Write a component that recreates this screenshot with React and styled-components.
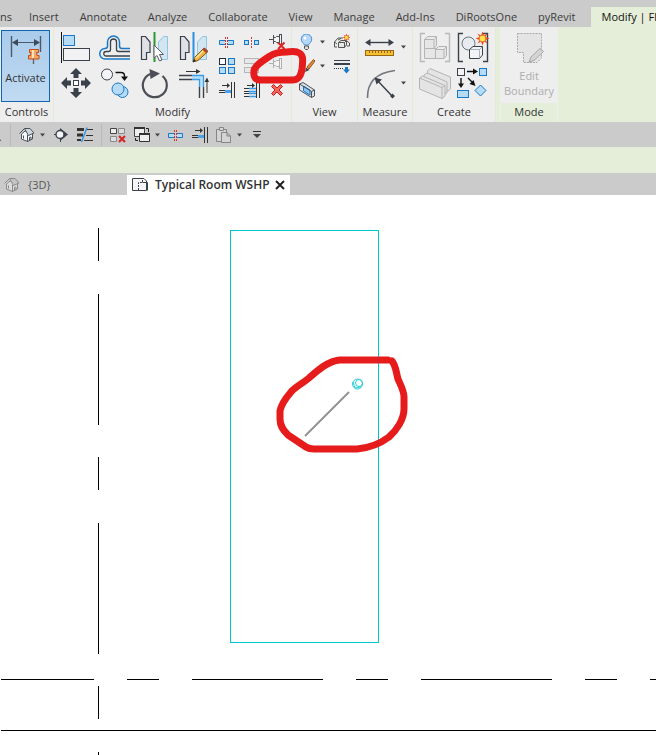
import styled, { createGlobalStyle } from "styled-components";

const INK = "#3a414b";
const BLUE = "#1a78c8";
const PALE = "#b5dcf4";
const DIM = "#b4b4b4";

const tabs = ["Insert", "Annotate", "Analyze", "Collaborate", "View", "Manage", "Add-Ins", "DiRootsOne", "pyRevit"];

export default function App() {
    return (
        <Page>
            <GlobalStyle />

            <TabBar>
                <FirstTab type="button">ns</FirstTab>
                {tabs.map((tab) => (
                    <Tab type="button" key={tab}>{tab}</Tab>
                ))}
                <ActiveTab type="button">Modify | Fl</ActiveTab>
            </TabBar>

            <Ribbon>
                <Panel>
                    <Activate type="button">
                        <DimensionIcon />
                        Activate
                    </Activate>
                    <PanelLabel>Controls</PanelLabel>
                </Panel>

                <Panel>
                    <Tools $pad={6} $gap={10}>
                        <LargeGrid $cols={4} $gap={7}>
                            <Tool label="Align"><AlignIcon /></Tool>
                            <Tool label="Offset"><OffsetIcon /></Tool>
                            <Tool label="Mirror - Pick Axis"><MirrorPickIcon /></Tool>
                            <Tool label="Mirror - Draw Axis"><MirrorDrawIcon /></Tool>
                            <Tool label="Move"><MoveIcon /></Tool>
                            <Tool label="Copy"><CopyIcon /></Tool>
                            <Tool label="Rotate"><RotateIcon /></Tool>
                            <Tool label="Trim to Corner"><CornerIcon /></Tool>
                        </LargeGrid>
                        <SmallGrid $cols={3}>
                            <Tool label="Split Element"><SplitIcon /></Tool>
                            <Tool label="Split with Gap"><SplitGapIcon /></Tool>
                            <Tool label="Unpin"><PinIcon color="#4a4f55" crossed /></Tool>
                            <Tool label="Array"><ArrayIcon /></Tool>
                            <Tool label="Scale" disabled><ScaleIcon /></Tool>
                            <Tool label="Pin" disabled><PinIcon color="#b0b0b0" /></Tool>
                            <Tool label="Trim Single"><TrimIcon /></Tool>
                            <Tool label="Trim Multiple"><TrimIcon multiple /></Tool>
                            <Tool label="Delete"><DeleteIcon /></Tool>
                        </SmallGrid>
                    </Tools>
                    <PanelLabel>Modify</PanelLabel>
                    <PinMarkup viewBox="0 0 62 40" aria-hidden="true">
                        <path d="M38 6 C31 6 25 7 21 10 C15 14 5 20 5 25 C4 32 7 34 12 34 H43 C50 34 52 30 53 23 C54 14 55 8 48 6 C44 5 40 6 36 6" />
                    </PinMarkup>
                </Panel>

                <Panel>
                    <Tools $pad={7} $gap={9}>
                        <SmallStack>
                            <Split><Tool label="Hide in View"><BulbIcon /></Tool><Caret /></Split>
                            <Split><Tool label="Override Graphics"><BrushIcon /></Tool><Caret /></Split>
                            <Tool label="Selection Box"><BoxIcon /></Tool>
                        </SmallStack>
                        <SmallStack>
                            <Tool label="Displace Elements"><DisplaceIcon /></Tool>
                            <Tool label="Linework"><LineworkIcon /></Tool>
                        </SmallStack>
                    </Tools>
                    <PanelLabel>View</PanelLabel>
                </Panel>

                <Panel>
                    <Tools $pad={6} $gap={6}>
                        <LargeGrid $cols={1} $gap={6}>
                            <Split><Tool label="Measure"><MeasureIcon /></Tool><Caret /></Split>
                            <Split><Tool label="Dimension"><RadiusIcon /></Tool><Caret /></Split>
                        </LargeGrid>
                    </Tools>
                    <PanelLabel>Measure</PanelLabel>
                </Panel>

                <Panel>
                    <Tools $pad={6} $gap={6}>
                        <LargeGrid $cols={2} $gap={6}>
                            <Tool label="Create Assembly" disabled><AssemblyIcon /></Tool>
                            <Tool label="Create Group"><GroupIcon /></Tool>
                            <Tool label="Create Parts" disabled><PartsIcon /></Tool>
                            <Tool label="Create Similar"><SimilarIcon /></Tool>
                        </LargeGrid>
                    </Tools>
                    <PanelLabel>Create</PanelLabel>
                </Panel>

                <ModePanel>
                    <EditButton type="button" disabled>
                        <BoundaryIcon />
                        Edit
                        <br />
                        Boundary
                    </EditButton>
                    <PanelLabel $green>Mode</PanelLabel>
                </ModePanel>
            </Ribbon>

            <QuickBar>
                <Clip />
                <Divider />
                <Split><Tool label="Default 3D View"><HouseIcon /></Tool><Caret /></Split>
                <Tool label="Section"><SectionIcon /></Tool>
                <Tool label="Thin Lines"><ThinLinesIcon /></Tool>
                <Divider />
                <Tool label="Close Inactive Views"><CloseViewsIcon /></Tool>
                <Split><Tool label="Switch Windows"><SwitchIcon /></Tool><Caret /></Split>
                <Tool label="Split Element"><SplitIcon /></Tool>
                <Tool label="Trim Single"><TrimIcon /></Tool>
                <Split><Tool label="Paste" disabled><PasteIcon /></Tool><Caret /></Split>
                <Tool label="Customize Quick Access Toolbar"><CustomizeIcon /></Tool>
            </QuickBar>

            <OptionsBar />

            <DocTabs>
                <DocTab type="button">
                    <HouseIcon faded />
                    {"{3D}"}
                </DocTab>
                <OpenDoc>
                    <DocTitle type="button">
                        <SheetIcon />
                        Typical Room WSHP
                    </DocTitle>
                    <Tool label="Close view"><CrossIcon /></Tool>
                </OpenDoc>
            </DocTabs>

            <Canvas>
                <Drawing role="img" aria-label="Floor plan">
                    <g fill="none" stroke="#000" shapeRendering="crispEdges">
                        <line x1="98.5" y1="33" x2="98.5" y2="100%" strokeDasharray="33 33 131 32" />
                        <line x1="1" y1="484.5" x2="100%" y2="484.5" strokeDasharray="131 33 32 33" strokeDashoffset="38" />
                        <line x1="1" y1="535.5" x2="100%" y2="535.5" />
                        <rect x="230.5" y="35.5" width="148" height="412" stroke="#00c8c8" />
                    </g>
                    <line x1="305" y1="241" x2="349" y2="197" stroke="#929292" strokeWidth="2" />
                    <g fill="none" stroke="#2cd0d4">
                        <circle cx="357.5" cy="189" r="5" />
                        <circle cx="359" cy="188" r="3.5" />
                        <path d="M353 187 L355 193 L361 192" />
                    </g>
                    <path
                        d="M388 165 H340 C328 166 318 175 309 183 C302 189 295 192 291 197 C285 204 281 210 280 216 V224 C280 231 283 235 288 240 L306 252 C309 254 310 254 314 254 H357 C369 253 381 248 389 242 C397 235 404 224 404 214 V202 C404 196 401 191 398 184 C396 177 396 171 392 166"
                        fill="none"
                        stroke="#e61c1c"
                        strokeWidth="7"
                        strokeLinecap="round"
                        strokeLinejoin="round"
                    />
                </Drawing>
            </Canvas>
        </Page>
    );
}

function Tool({ label, disabled, children }) {
    return (
        <ToolButton type="button" aria-label={label} title={label} disabled={disabled}>
            {children}
        </ToolButton>
    );
}

function Caret() {
    return (
        <CaretSvg viewBox="0 0 5 4">
            <path d="M0 0.5 H5 L2.5 3.5 Z" fill="#444" />
        </CaretSvg>
    );
}

function Clip() {
    return (
        <ClipSvg viewBox="0 0 2 16">
            <path d="M0 12 L1 14 H0 Z" fill="#444" />
        </ClipSvg>
    );
}

/* 32px ribbon icons */

function DimensionIcon() {
    return (
        <Icon32 viewBox="0 0 32 32">
            <g stroke="#4b5a6b" fill="none">
                <path d="M1.5 3 V24 M30.5 3 V19" strokeWidth="1.4" />
                <path d="M3 9.5 H29" />
            </g>
            <path d="M2 9.5 L8 6 V13 Z M30 9.5 L24 6 V13 Z" fill="#3c4a5a" />
            <path d="M23.5 25 V31" stroke="#666" strokeWidth="1.4" />
            <path d="M19.5 16.5 H28.5 V19.5 H26.5 L27 22.5 H29 V26 H18.5 V22.5 H20.5 L21 19.5 H19.5 Z" fill="#f6a562" stroke="#c44d17" />
            <path d="M23 17 V25" stroke="#ffe3bd" strokeWidth="2" />
        </Icon32>
    );
}

function AlignIcon() {
    return (
        <Icon32 viewBox="0 0 32 32">
            <path d="M1.5 1 V32" stroke="#111" />
            <rect x="3.5" y="4.5" width="11" height="10" fill={PALE} stroke={BLUE} />
            <rect x="3.5" y="17.5" width="26" height="12" fill="#f2f2f4" stroke={INK} />
        </Icon32>
    );
}

function OffsetIcon() {
    return (
        <Icon32 viewBox="0 0 32 32" fill="none">
            <path d="M31 17.5 H23 Q20.5 17.5 20.5 15 V11 A6 6 0 0 0 8.5 11 V15 Q8.5 17.5 6 17.5 A5.2 5.2 0 0 0 6 28 H31" stroke={BLUE} strokeWidth="1.5" />
            <path d="M31 20.5 H19.5 Q17.5 20.5 17.5 18.5 V11 A3 3 0 0 0 11.5 11 V18.5 Q11.5 20.5 9.5 20.5 H7 A2.2 2.2 0 0 0 7 25 H31" stroke={INK} strokeWidth="1.3" />
        </Icon32>
    );
}

function MirrorHalves({ axis }) {
    return (
        <>
            <path d="M3.5 5.5 H7.5 L12 11 V21.5 H8.5 V28.5 H3.5 Z" fill="#e0e1e6" stroke={INK} strokeWidth="1.2" />
            <path d="M29.5 5.5 H25.5 L20.5 11 V28.5 H29.5 Z" fill="#d2e6f2" stroke="#8fc4e4" />
            <path d="M16.5 1 V31" stroke={axis} strokeWidth="2" />
        </>
    );
}

function MirrorPickIcon() {
    return (
        <Icon32 viewBox="0 0 32 32">
            <MirrorHalves axis="#2e9a2e" />
            <path d="M16 14 V27 L19 24.5 L21.5 30 L24 29 L21.5 23.5 H25.5 Z" fill="#fff" stroke="#5b5f66" />
        </Icon32>
    );
}

function MirrorDrawIcon() {
    return (
        <Icon32 viewBox="0 0 32 32">
            <MirrorHalves axis="#2a8fe6" />
            <path d="M16 31 L17.5 26.5 L27 17 L31 20.5 L21 29.5 Z" fill="#f5b342" stroke="#7c5a1c" />
            <path d="M25.5 18.5 L27.5 16.5 L31 20 L29 22 Z" fill="#a8442a" />
            <path d="M16 31 L17 28 L19 30 Z" fill="#222" />
            <path d="M19 27 L26 20" stroke="#fde6a4" strokeWidth="1.4" />
        </Icon32>
    );
}

function MoveIcon() {
    return (
        <Icon32 viewBox="0 0 32 32">
            <path
                d="M16 1 L22 7 H18.5 V11 H13.5 V7 H10 Z M16 31 L22 25 H18.5 V21 H13.5 V25 H10 Z M1 16 L7 10 V13.5 H11 V18.5 H7 V22 Z M31 16 L25 10 V13.5 H21 V18.5 H25 V22 Z"
                fill={INK}
            />
            <rect x="13.5" y="13.5" width="5" height="5" fill="#fff" stroke={INK} />
        </Icon32>
    );
}

function CopyIcon() {
    return (
        <Icon32 viewBox="0 0 32 32">
            <circle cx="8" cy="7.5" r="5.5" fill="#f4f4f6" stroke={INK} />
            <path d="M16.5 5.5 H22 Q25.5 5.5 25.5 9 V11" fill="none" stroke="#111" strokeWidth="1.4" />
            <path d="M22 9.5 H29 L25.5 14 Z" fill="#111" />
            <circle cx="23.5" cy="25" r="5.5" fill={PALE} stroke={BLUE} />
            <circle cx="19" cy="22" r="6" fill={PALE} stroke={BLUE} />
        </Icon32>
    );
}

function RotateIcon() {
    return (
        <Icon32 viewBox="0 0 32 32">
            <path d="M24.5 9 A12 12 0 1 1 12.5 7" fill="none" stroke="#4b4f55" strokeWidth="2.2" />
            <path d="M11.5 2 L22 6.5 L12.5 12 Z" fill="#4b4f55" />
        </Icon32>
    );
}

function CornerIcon() {
    return (
        <Icon32 viewBox="0 0 32 32" fill="none">
            <path d="M15 10.5 H24.5 V20" stroke="#b9e0fa" strokeWidth="4" />
            <path d="M15 8.5 H26.5 V20 M15 12.5 H22.5 V20" stroke="#3b9be8" strokeWidth="1.3" />
            <path d="M2 8.5 H15 M2 12.5 H15 M22.5 20 V31 M26.5 20 V31" stroke={INK} strokeWidth="1.4" />
            <path d="M9 4.5 H22 M30 26 V13" stroke="#333" />
            <path d="M19 2 L23.5 4.5 L19 7 Z M27.5 15 L30 10.5 L32 15 Z" fill="#333" />
        </Icon32>
    );
}

function MeasureIcon() {
    return (
        <Icon32 viewBox="0 0 32 32">
            <path d="M3 11.5 H28" stroke={INK} strokeWidth="1.4" />
            <path d="M1 11.5 L6.5 8 V15 Z M30 11.5 L24.5 8 V15 Z" fill={INK} />
            <rect x="1.5" y="19.5" width="28" height="5" fill="#f5c030" stroke="#97681a" />
            <path d="M5.5 20 V22 M8.5 20 V22 M11.5 20 V22 M14.5 20 V22 M17.5 20 V22 M20.5 20 V22 M23.5 20 V22 M26.5 20 V22" stroke="#97681a" />
        </Icon32>
    );
}

function RadiusIcon() {
    return (
        <Icon32 viewBox="0 0 32 32">
            <path d="M3.5 31 Q3 7 31 3.5" fill="none" stroke="#74787e" strokeWidth="1.6" />
            <path d="M13 13 L28 29" stroke={INK} strokeWidth="1.4" />
            <path d="M10.5 10.5 L18 12.5 L12.5 17.5 Z M28.5 26.5 L31 29 L28.5 31.5 L26 29 Z" fill={INK} />
        </Icon32>
    );
}

function Brackets({ color }) {
    return <path d="M6 2.5 H1.5 V30.5 H6 M26 2.5 H30.5 V30.5 H26" fill="none" stroke={color} strokeWidth="1.4" />;
}

function AssemblyIcon() {
    return (
        <Icon32 viewBox="0 0 32 32">
            <Brackets color="#b9b9b9" />
            <g fill="#e6e6e6" stroke={DIM}>
                <path d="M5.5 8.5 L8.5 5.5 H17.5 V14.5 L15 17.5 H5.5 Z M5.5 8.5 H15 L17.5 5.5 M15 8.5 V17" />
                <path d="M16.5 18.5 L19.5 15.5 H27.5 V24.5 L25 27.5 H16.5 Z M16.5 18.5 H25 L27.5 15.5 M25 18.5 V27" />
                <path d="M5.5 17.5 H16.5 V27.5 H5.5 Z" />
            </g>
        </Icon32>
    );
}

function Spark({ x, y, r = 6 }) {
    return (
        <g transform={`translate(${x} ${y}) scale(${r / 6})`}>
            <path d="M0 -6 L1.3 -2.5 L4.3 -4.3 L2.5 -1.3 L6 0 L2.5 1.3 L4.3 4.3 L1.3 2.5 L0 6 L-1.3 2.5 L-4.3 4.3 L-2.5 1.3 L-6 0 L-2.5 -1.3 L-4.3 -4.3 L-1.3 -2.5 Z" fill="#ee4a16" />
            <circle r="2.5" fill="#ffe14d" />
        </g>
    );
}

function GroupIcon() {
    return (
        <Icon32 viewBox="0 0 32 32">
            <Brackets color={INK} />
            <circle cx="11.5" cy="12.5" r="6.5" fill="#e8ecf0" stroke="#6b737d" />
            <path d="M12.5 18.5 L16 15.5 H25.5 V24 L22.5 27.5 H12.5 Z" fill="#f2f4f7" stroke={INK} />
            <path d="M13 18.5 H22.5 V27 M22.5 18.5 L25 16" fill="none" stroke="#aab2ba" />
            <Spark x={25.5} y={7.5} r={7} />
        </Icon32>
    );
}

function PartsIcon() {
    return (
        <Icon32 viewBox="0 0 32 32" fill="#e4e4e4" stroke={DIM}>
            <path d="M8.5 4 L11 1.5 L31.5 10 V22 L29 24 L8.5 15 Z" />
            <path d="M5 8 L8 6 L28 15 V26 L25 27 L5 18 Z" />
            <path d="M0.5 11 L3.5 9 L26 18.5 V29 L23 31.5 L0.5 22 Z M0.5 11 L23 20.5 V31.5 M23 20.5 L26 18.5" />
        </Icon32>
    );
}

function SimilarIcon() {
    return (
        <Icon32 viewBox="0 0 32 32">
            <rect x="0.5" y="1.5" width="7" height="7" fill="#f4f4f6" stroke={INK} />
            <g fill={PALE} stroke={BLUE}>
                <rect x="22.5" y="1.5" width="7" height="7" />
                <rect x="0.5" y="23.5" width="11" height="7" />
                <path d="M23.5 18 L29 23.5 L23.5 29 L18 23.5 Z" />
            </g>
            <path d="M10 4.5 H17 M4 11 V18 M11 11 L16 16" stroke="#111" strokeWidth="1.4" />
            <path d="M16 1.5 L21 4.5 L16 7.5 Z M1 16.5 H7 L4 21 Z M18.5 19 L12.5 17 L16.5 13 Z" fill="#111" />
        </Icon32>
    );
}

function BoundaryIcon() {
    return (
        <Icon32 viewBox="0 0 32 32">
            <path d="M4.5 2.5 H28.5 V27 L24 31.5 H10.5 V21.5 H4.5 Z" fill="#e4e4e4" stroke="#a8a8a8" strokeDasharray="2 1" />
            <path d="M16 31 L18 26 L27 17.5 L30.5 20.5 L21 29.5 Z" fill="#d5d5d5" stroke="#a6a6a6" />
        </Icon32>
    );
}

/* 16px icons */

function SplitIcon() {
    return (
        <Icon16 viewBox="0 0 16 16">
            <path d="M6 6.5 H0.5 V10.5 H6 M9 6.5 H14.5 V10.5 H9" fill={PALE} stroke={BLUE} />
            <path d="M6.5 3 V14 M8.5 3 V14" stroke="#d0392b" strokeDasharray="2 1" />
        </Icon16>
    );
}

function SplitGapIcon() {
    return (
        <Icon16 viewBox="0 0 16 16">
            <rect x="0.5" y="6.5" width="4" height="4" fill={PALE} stroke={BLUE} />
            <rect x="10.5" y="6.5" width="4" height="4" fill={PALE} stroke={BLUE} />
            <path d="M7.5 3 V14" stroke="#d0392b" strokeDasharray="2 1" />
        </Icon16>
    );
}

function PinIcon({ color, crossed }) {
    return (
        <Icon16 viewBox="0 0 16 16">
            <path d="M4.5 3.5 H6.5 L7.5 2.5 H10.5 V8.5 H7.5 L6.5 7.5 H4.5 Z" fill="#f4f4f4" stroke={color} />
            <path d="M0 5.5 H4 M4.5 1 V10" stroke={color} />
            <rect x="10.5" y="0.5" width="2" height="10" fill="#f4f4f4" stroke={color} />
            {crossed && <path d="M9 8.5 L15.5 15 M15.5 8.5 L9 15" stroke="#d42a2a" strokeWidth="2" />}
        </Icon16>
    );
}

function ArrayIcon() {
    return (
        <Icon16 viewBox="0 0 16 16">
            <rect x="0.5" y="0.5" width="6" height="6" fill="#fff" stroke="#26303c" />
            <g fill={PALE} stroke={BLUE}>
                <rect x="9.5" y="0.5" width="6" height="6" />
                <rect x="0.5" y="9.5" width="6" height="6" />
                <rect x="9.5" y="9.5" width="6" height="6" />
            </g>
        </Icon16>
    );
}

function ScaleIcon() {
    return (
        <Icon16 viewBox="0 0 16 16" fill="#e8e8e8" stroke="#b5b5b5">
            <rect x="0.5" y="0.5" width="14" height="5" />
            <rect x="0.5" y="9.5" width="14" height="5" />
        </Icon16>
    );
}

function TrimIcon({ multiple }) {
    return (
        <Icon16 viewBox="0 0 16 16">
            {multiple ? (
                <>
                    <path d="M0 6.5 H5 M0 9.5 H5 M0 11.5 H5 M0 14.5 H5" stroke="#333" />
                    <path d="M5 6.5 H12 M5 9.5 H12 M5 11.5 H12 M5 14.5 H12" stroke="#3b9be8" strokeWidth="1.4" />
                </>
            ) : (
                <>
                    <path d="M0 8.5 H6 M0 10.5 H6" stroke="#333" />
                    <path d="M6 9.5 H13" stroke="#4aa3ea" strokeWidth="3" />
                </>
            )}
            <path d="M3 3.5 H9 M12.5 0 V16 M15.5 0 V16" stroke="#333" />
            <path d="M8 1 L11 3.5 L8 6 Z" fill="#333" />
        </Icon16>
    );
}

function DeleteIcon() {
    return (
        <Icon16 viewBox="0 0 16 16">
            <path d="M2.5 4.5 L4.5 2.5 L8 6 L11.5 2.5 L13.5 4.5 L10 8 L13.5 11.5 L11.5 13.5 L8 10 L4.5 13.5 L2.5 11.5 L6 8 Z" fill="#f0685c" stroke="#c41f1f" />
        </Icon16>
    );
}

function BulbIcon() {
    return (
        <Icon16 viewBox="0 0 16 16">
            <path d="M5.5 11 Q5 9.5 3.5 8.5 A5.2 5.2 0 1 1 11.5 8.5 Q10 9.5 9.5 11 Z" fill="#b6d8f8" stroke="#4a8fd8" />
            <circle cx="6" cy="4" r="1.5" fill="#fff" />
            <path d="M5.5 12 H9.5 V14.5 L8.5 15.5 H6.5 L5.5 14.5 Z" fill="#ddd" stroke="#555" />
        </Icon16>
    );
}

function BrushIcon() {
    return (
        <Icon16 viewBox="0 0 16 16">
            <path d="M8 9 L14.5 1.5 L16 3 L10 11 Z" fill="#e08a3c" stroke="#9c5318" />
            <path d="M6 14 L7 9.5 L10.5 12 Z" fill="#444" />
        </Icon16>
    );
}

function BoxIcon() {
    return (
        <Icon16 viewBox="0 0 16 16">
            <path d="M0.5 2 L4 0.5 L15.5 8 V14 L12.5 15.5 L0.5 8 Z" fill="#dfe3e8" stroke="#4b5158" />
            <path d="M4.5 4 L11 8 V13 L4.5 9 Z" fill="#8cc6f4" stroke={BLUE} />
            <path d="M12.5 15.5 V9.5 L0.5 2 M12.5 9.5 L15.5 8" fill="none" stroke="#4b5158" />
        </Icon16>
    );
}

function DisplaceIcon() {
    return (
        <Icon16 viewBox="0 0 16 16">
            <path d="M0.5 8 L4 4 H9 M0.5 8 V13 H3 M0.5 8 L3 10 M13 7 L15.5 9 V12 H13 M4 6 L7 4.5" fill="none" stroke="#555" />
            <path d="M4.5 8.5 L7 6.5 H12.5 V11 L10.5 13.5 H4.5 Z M4.5 8.5 H10.5 V13.5 M10.5 8.5 L12.5 6.5" fill="#e8e8e8" stroke="#555" />
            <Spark x={12.5} y={3.5} r={4} />
        </Icon16>
    );
}

function LineworkIcon() {
    return (
        <Icon16 viewBox="0 0 16 16">
            <path d="M0 2.5 H16" stroke={INK} />
            <path d="M0 6 H16" stroke={INK} strokeWidth="2" />
            <path d="M0 10.5 H9" stroke="#333" strokeDasharray="1 1" />
            <path d="M11 9 H14 V11.5 H16 L12.5 15.5 L9 11.5 H11 Z" fill={BLUE} />
        </Icon16>
    );
}

function HouseIcon({ faded }) {
    const line = faded ? "#8b8b8b" : "#4b5158";
    return (
        <Icon16 viewBox="0 0 16 16">
            <path d="M2.5 7 L6 4 L13.5 6 V12 L8.5 14.5 L2.5 12 Z" fill={faded ? "#dcdcdc" : "#f4f6f8"} stroke={line} />
            <path d="M5.5 1.5 L11 1.5 L15 6 L9.5 8.5 Z" fill={faded ? "#c4c4c4" : "#cfd8e0"} stroke={line} />
            <path d="M0.5 6.5 L5.5 1.5 M8.5 8 V14.5 M10.5 13.5 V10.5 L12 10 V13 M4.5 8.5 V11.5" fill="none" stroke={line} />
        </Icon16>
    );
}

function SectionIcon() {
    return (
        <Icon16 viewBox="0 0 16 16">
            <path d="M7 1 L15 7.5 L7 14 Z" fill={INK} />
            <circle cx="7" cy="7.5" r="4" fill="#f4f4f4" stroke={INK} strokeWidth="1.4" />
            <path d="M1 7.5 H3 M7.5 12 V15" stroke={INK} />
        </Icon16>
    );
}

function ThinLinesIcon() {
    return (
        <Icon16 viewBox="0 0 16 16">
            <path d="M0 2.5 H7 M0 8 H6" stroke="#333" strokeWidth="3" />
            <path d="M0 13 H4" stroke="#333" strokeWidth="2" />
            <path d="M10 2.5 H16 M9 8.5 H16 M7 13.5 H16" stroke="#333" />
            <path d="M10 0.5 L4.5 15" stroke="#2f93e4" strokeWidth="1.4" />
        </Icon16>
    );
}

function CloseViewsIcon() {
    return (
        <Icon16 viewBox="0 0 16 16">
            <path d="M0.5 1.5 H6.5 V6.5 H0.5 Z" fill="#eee" stroke="#444" />
            <path d="M8.5 1.5 H14.5 V6.5 H8.5 Z M0.5 9.5 H6.5 V14.5 H0.5 Z" fill="#ddd" stroke="#8a8a8a" />
            <path d="M9 9 L15 15 M15 9 L9 15" stroke="#d42a2a" strokeWidth="2.2" />
        </Icon16>
    );
}

function SwitchIcon() {
    return (
        <Icon16 viewBox="0 0 16 16">
            <path d="M0.5 0.5 H10.5 V9.5 H0.5 Z" fill="#eee" stroke="#444" />
            <path d="M0 1 H11" stroke="#333" strokeWidth="2" />
            <path d="M5.5 6.5 H15.5 V14.5 H5.5 Z" fill="#eee" stroke="#333" />
            <path d="M5 7 H16" stroke="#333" strokeWidth="2" />
            <path d="M12 1.5 H14.5 V5 M4 13.5 H1.5 V11" fill="none" stroke="#222" />
        </Icon16>
    );
}

function PasteIcon() {
    return (
        <Icon16 viewBox="0 0 16 16" fill="#d4d4d4" stroke="#858585">
            <path d="M0.5 2.5 H10.5 V14.5 H0.5 Z" />
            <path d="M3.5 0.5 H7.5 V3.5 H3.5 Z" />
            <path d="M5.5 5.5 H11 L14.5 9 V15.5 H5.5 Z M11 5.5 V9 H14.5" />
        </Icon16>
    );
}

function CustomizeIcon() {
    return (
        <Icon16 viewBox="0 0 16 16">
            <path d="M3 4.5 H11" stroke="#333" />
            <path d="M3 7 H11 L7 11 Z" fill="#444" />
        </Icon16>
    );
}

function SheetIcon() {
    return (
        <Icon16 viewBox="0 0 16 16" fill="#f4f6f8" stroke={INK}>
            <path d="M0.5 1.5 H12 L14.5 4 V13.5 H0.5 Z" />
            <path d="M6.5 13 V5.5 H10.5 V1.5" fill="none" strokeDasharray="2 1" />
            <path d="M10.5 5.5 H15.5 V13.5" fill="none" />
        </Icon16>
    );
}

function CrossIcon() {
    return (
        <Icon16 viewBox="0 0 16 16">
            <path d="M4 4 L12 12 M12 4 L4 12" stroke="#222" strokeWidth="2" />
        </Icon16>
    );
}

const GlobalStyle = createGlobalStyle`
    *, *::before, *::after {
        box-sizing: border-box;
    }

    body {
        margin: 0;
        background: #fff;
        color: #333;
        font-family: "Open Sans", "Noto Sans", sans-serif;
        font-size: 11px;
        line-height: 16px;
    }

    button {
        margin: 0;
        padding: 0;
        border: 0;
        background: none;
        color: inherit;
        font: inherit;
        white-space: nowrap;
    }
`;

const Page = styled.div`
    display: flex;
    flex-direction: column;
    min-height: 100vh;
    overflow: hidden;
`;

const TabBar = styled.nav`
    display: flex;
    align-items: flex-end;
    gap: 1px;
    height: 27px;
    background: #cbcbcb;
    overflow: hidden;
`;

const Tab = styled.button`
    flex: none;
    height: 20px;
    padding: 0 10px;
    text-align: left;
    color: #3c3c3c;
`;

const FirstTab = styled(Tab)`
    padding: 0 6px 0 0;
`;

const ActiveTab = styled(Tab)`
    flex: 1 0 auto;
    margin-left: 5px;
    color: #111;
    background: #e5eed8;
`;

const Ribbon = styled.section`
    display: flex;
    height: 95px;
    background: #e5eed8;
`;

const Panel = styled.div`
    position: relative;
    display: flex;
    flex: none;
    flex-direction: column;
    justify-content: space-between;
    border-right: 1px solid #e2ebd3;
    background: #eeeeee;
`;

const PanelLabel = styled.div`
    height: 19px;
    line-height: 18px;
    text-align: center;
    background: ${({ $green }) => ($green ? "#e5eed8" : "none")};
`;

const ModePanel = styled(Panel)`
    margin-left: 4px;
    border: 1px solid #eeeeee;
    border-width: 0 1px;
`;

const Activate = styled.button`
    display: flex;
    flex-direction: column;
    align-items: center;
    gap: 5px;
    width: 49px;
    height: 72px;
    margin: 3px 3px 0 1px;
    padding-top: 2px;
    border: 1px solid #1464b4;
    background: linear-gradient(#a9cbeb, #c0daf1);
`;

const EditButton = styled.button`
    padding: 4px 3px 0;
    line-height: 15px;
    color: #adadad;

    svg {
        margin: 0 auto 5px;
    }
`;

const Tools = styled.div`
    display: flex;
    gap: ${({ $gap }) => $gap}px;
    padding: 4px ${({ $pad }) => $pad}px 0;
`;

const LargeGrid = styled.div`
    display: grid;
    grid-template-columns: repeat(${({ $cols }) => $cols}, auto);
    gap: 4px ${({ $gap }) => $gap}px;
`;

const SmallGrid = styled.div`
    display: grid;
    grid-template-columns: repeat(${({ $cols }) => $cols}, 16px);
    grid-auto-rows: 16px;
    gap: 8px 9px;
    padding-top: 3px;
`;

const SmallStack = styled.div`
    display: flex;
    flex-direction: column;
    gap: 8px;
    padding-top: 3px;
`;

const Split = styled.div`
    display: flex;
    align-items: center;
    gap: 5px;
`;

const ToolButton = styled.button`
    display: block;
    flex: none;
`;

const Icon32 = styled.svg`
    display: block;
    width: 32px;
    height: 32px;
`;

const Icon16 = styled.svg`
    display: block;
    flex: none;
    width: 16px;
    height: 16px;
`;

const CaretSvg = styled.svg`
    width: 5px;
    height: 4px;
`;

const ClipSvg = styled.svg`
    width: 2px;
    height: 16px;
`;

const PinMarkup = styled.svg`
    position: absolute;
    z-index: 1;
    top: 19px;
    right: -20px;
    width: 62px;
    height: 40px;
    pointer-events: none;

    path {
        fill: none;
        stroke: #e61c1c;
        stroke-width: 7px;
        stroke-linecap: round;
    }
`;

const QuickBar = styled.div`
    display: flex;
    align-items: center;
    gap: 8px;
    height: 25px;
    background: #cbcbcb;
`;

const Divider = styled.div`
    width: 1px;
    height: 22px;
    background: #b9b9b9;
`;

const OptionsBar = styled.div`
    height: 26px;
    background: #e5eed8;
`;

const DocTabs = styled.nav`
    display: flex;
    align-items: flex-end;
    height: 22px;
    background: #cbcbcb;
`;

const DocTab = styled.button`
    display: flex;
    align-items: center;
    gap: 8px;
    width: 127px;
    height: 20px;
    padding-left: 4px;
    color: #555;
`;

const OpenDoc = styled.div`
    display: flex;
    align-items: center;
    gap: 2px;
    height: 20px;
    padding: 0 2px 0 5px;
    background: #fff;
`;

const DocTitle = styled.button`
    display: flex;
    align-items: center;
    gap: 7px;
    font-size: 12px;
    font-weight: 600;
`;

const Canvas = styled.main`
    display: flex;
    flex: 1;
    min-height: 560px;
    background: #fff;
`;

const Drawing = styled.svg`
    flex: 1;
    width: 100%;
`;
